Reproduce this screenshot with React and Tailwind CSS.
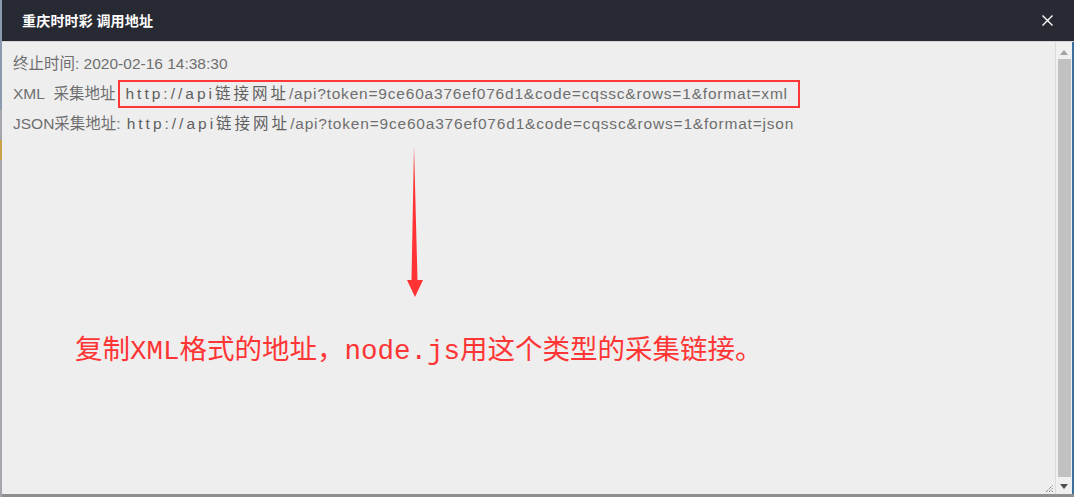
export default function App() {
  const sans = { fontFamily: '"Liberation Sans", "Noto Sans CJK SC", sans-serif' };
  return (
    <div className="w-[1074px] h-[497px] bg-[#8e8e8e] flex overflow-hidden" style={sans}>
      <div className="w-[2px] h-full bg-[#a3a7ab] flex flex-col">
        <div className="h-[110px] bg-[#8a9bb0]" />
        <div className="h-[20px] bg-[#c9a24a] mt-[30px]" />
      </div>
      <div className="flex-1 flex flex-col h-[494px]">
        <div className="h-[41px] bg-[#272a33] flex items-center justify-between pl-[20px] pr-[18px] shrink-0">
          <div className="text-white font-bold text-[14px] tracking-[0.2px]" style={{ fontFamily: '"Noto Sans CJK SC", sans-serif' }}>
            重庆时时彩 调用地址
          </div>
          <svg width="13" height="13" viewBox="0 0 13 13" className="mr-[2px]">
            <path d="M1.5 1.5 L11.5 11.5 M11.5 1.5 L1.5 11.5" stroke="#ffffff" strokeWidth="1.4" />
          </svg>
        </div>
        <div className="h-px bg-[#d4d4d4] shrink-0" />
        <div className="flex-1 flex min-h-0">
          <div className="flex-1 relative bg-[#eeeeee] pl-[11px] pt-[7px] text-[15.5px] text-[#6e6e6e] border-r border-[#dcdcdc]">
            <div className="h-[30px] flex items-center">终止时间: 2020-02-16 14:38:30</div>
            <div className="h-[30px] flex items-center">
              <span className="mr-[3px]">XML&nbsp;&nbsp;采集地址</span>
              <span className="border-2 border-[#ff3636] h-[28px] flex items-center pl-[5px] pr-[10px]">
                <span className="tracking-[3px] text-[#5e5e5e]">http://api链接网址</span>
                <span className="tracking-[0.8px]">/api?token=9ce60a376ef076d1&amp;code=cqssc&amp;rows=1&amp;format=xml</span>
              </span>
            </div>
            <div className="h-[30px] flex items-center">
              <span className="mr-[6px]">JSON采集地址:</span>
              <span className="tracking-[3px] text-[#5e5e5e]">http://api链接网址</span>
              <span className="tracking-[0.8px]">/api?token=9ce60a376ef076d1&amp;code=cqssc&amp;rows=1&amp;format=json</span>
            </div>
            <svg className="absolute left-[401px] top-[102px]" width="22" height="155" viewBox="0 0 22 155">
              <polygon points="11,2 14.5,136 20,136 12,153 4,136 8.5,136" fill="#ff3333" />
            </svg>
            <div
              className="mt-[193px] ml-[62px] text-[27.5px] leading-[40px] text-[#ff3535]"
              style={{ fontFamily: '"Liberation Mono", "Noto Sans CJK SC", monospace' }}
            >
              复制XML格式的地址，node.js用这个类型的采集链接。
            </div>
            <svg className="absolute right-[1px] bottom-[1px]" width="9" height="9" viewBox="0 0 9 9">
              <path d="M1 8 L8 1 M4 8 L8 4 M7 8 L8 7" stroke="#555" strokeWidth="1" strokeDasharray="1 1" />
            </svg>
          </div>
          <div className="w-[16px] bg-[#f0f0f0] flex flex-col items-center">
            <div className="h-[16px] flex items-end justify-center pb-[3px]">
              <svg width="8" height="5" viewBox="0 0 8 5"><polygon points="4,0 8,5 0,5" fill="#a3a3a3" /></svg>
            </div>
            <div className="flex-1 w-[13px] bg-[#c1c1c1] mt-[1px] mb-[1px]" />
            <div className="h-[16px] flex items-start justify-center pt-[6px]">
              <svg width="8" height="5" viewBox="0 0 8 5"><polygon points="0,0 8,0 4,5" fill="#505050" /></svg>
            </div>
          </div>
          <div className="w-[2px] bg-[#3e6f9c]" />
        </div>
      </div>
    </div>
  );
}
